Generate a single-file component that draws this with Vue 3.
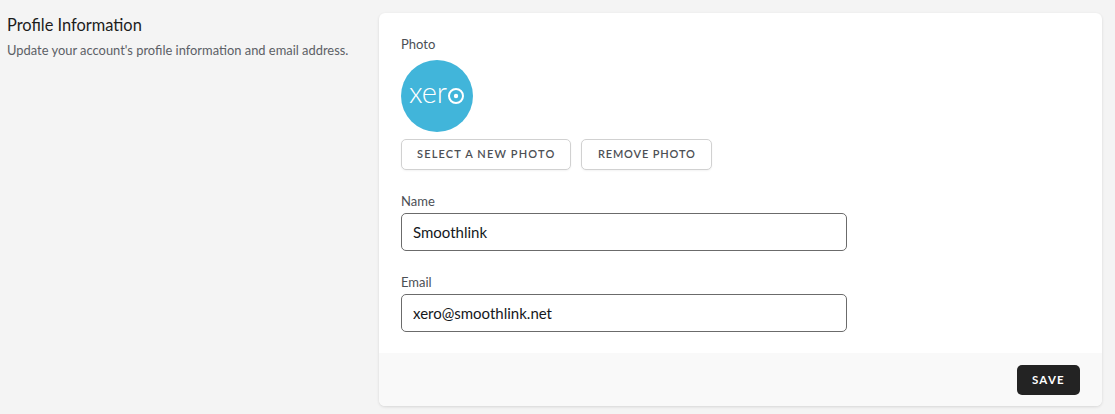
<template>
  <div class="page">
    <div class="intro">
      <h3 class="title">Profile Information</h3>
      <p class="desc">Update your account's profile information and email address.</p>
    </div>

    <form class="card" @submit.prevent>
      <div class="card-body">
        <div class="photo-field">
          <label class="label">Photo</label>
          <svg class="avatar" viewBox="0 0 72 72" role="img" aria-label="Xero">
            <circle cx="36" cy="36" r="36" fill="#41b5da" />
            <text x="8" y="43" textLength="38" class="logo-text">xer</text>
            <circle cx="55" cy="36" r="7" fill="none" stroke="#fff" stroke-width="2" />
            <circle cx="55" cy="36" r="2.2" fill="#fff" />
          </svg>
          <div class="photo-actions">
            <button type="button" class="btn">Select a new photo</button>
            <button type="button" class="btn btn-remove">Remove photo</button>
          </div>
        </div>

        <div class="field" v-for="field in fields" :key="field.label">
          <label class="label">{{ field.label }}</label>
          <input class="input" :type="field.type" :value="field.value" />
        </div>
      </div>

      <div class="card-footer">
        <button type="submit" class="btn-save">Save</button>
      </div>
    </form>
  </div>
</template>

<script setup>
const fields = [
  { label: 'Name', type: 'text', value: 'Smoothlink' },
  { label: 'Email', type: 'email', value: 'xero@smoothlink.net' }
]
</script>

<style>
html,
body {
  background: #f4f4f4;
}
</style>

<style scoped>
.page {
  display: grid;
  grid-template-columns: 372px 723px;
  padding: 13px 0 8px 7px;
  font-family: Lato, 'Open Sans', sans-serif;
}

.title {
  margin: 0;
  padding-top: 1px;
  font-size: 16.4px;
  font-weight: 400;
  line-height: 22px;
  color: #1c1c1c;
}

.desc {
  margin: 4px 0 0;
  font-size: 12.9px;
  line-height: 20px;
  color: #5c6066;
}

.card {
  background: #fff;
  border-radius: 6px;
  box-shadow: 0 1px 3px rgba(0, 0, 0, 0.12);
  overflow: hidden;
}

.card-body {
  display: flex;
  flex-direction: column;
  gap: 21px;
  padding: 21px 22px;
}

.label {
  display: block;
  font-size: 13px;
  line-height: 20px;
  color: #4b4f55;
}

.avatar {
  display: block;
  width: 72px;
  height: 72px;
  margin-top: 6px;
}

.logo-text {
  font-family: Lato, sans-serif;
  font-size: 29px;
  font-weight: 300;
  fill: #fff;
}

.photo-actions {
  display: flex;
  gap: 10px;
  margin-top: 7px;
}

.btn {
  height: 31px;
  padding: 0 15px 2px;
  background: #fff;
  border: 1px solid #d1d1d1;
  border-radius: 5px;
  box-shadow: 0 1px 2px rgba(0, 0, 0, 0.05);
  font-family: inherit;
  font-size: 11px;
  font-weight: 600;
  letter-spacing: 1.15px;
  text-transform: uppercase;
  color: #4d5055;
}

.btn-remove {
  padding: 0 15.5px 2px;
  letter-spacing: 0.85px;
}

.field .input {
  margin-top: 2px;
}

.input {
  display: block;
  box-sizing: border-box;
  width: 446px;
  height: 38px;
  padding: 0 11px;
  background: #fff;
  border: 1px solid #6b6b6b;
  border-radius: 5px;
  font-family: inherit;
  font-size: 15px;
  color: #15181c;
}

.card-footer {
  display: flex;
  justify-content: flex-end;
  padding: 12px 22px 11px;
  background: #f9f9f9;
}

.btn-save {
  height: 30px;
  padding: 0 15px 2px;
  background: #232323;
  border: 0;
  border-radius: 5px;
  font-family: inherit;
  font-size: 11.5px;
  font-weight: 700;
  letter-spacing: 1.25px;
  text-transform: uppercase;
  color: #fff;
}
</style>
